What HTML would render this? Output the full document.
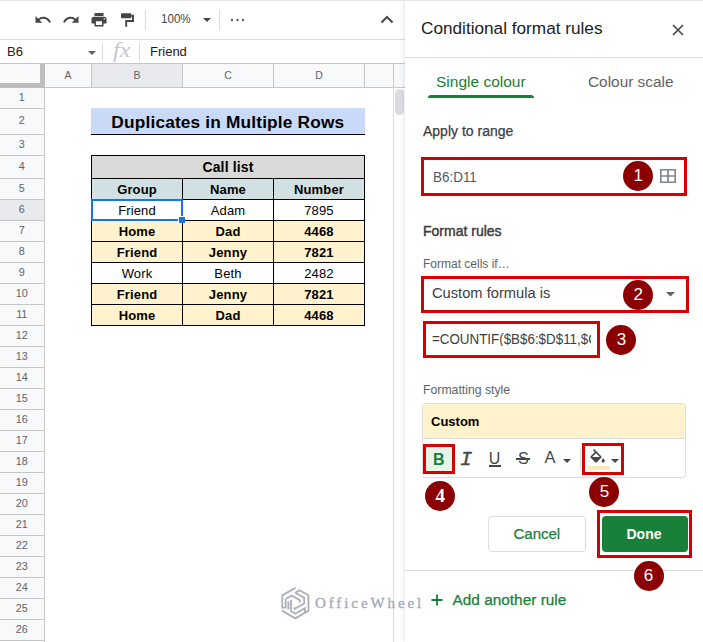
<!DOCTYPE html>
<html><head><meta charset="utf-8">
<style>
*{box-sizing:border-box;margin:0;padding:0}
html,body{width:703px;height:642px;overflow:hidden;background:#fff}
body{position:relative;font-family:"Liberation Sans",Arial,sans-serif;color:#202124}
.abs{position:absolute}
.t{position:absolute;white-space:nowrap;line-height:1}
.vsep{position:absolute;width:1px;background:#dadce0}
  .ch{position:absolute;top:64px;height:24px;background:#f8f9fa;border-right:1px solid #c4c7c5;border-bottom:1px solid #c4c7c5;font-size:10.5px;color:#5f6368;text-align:center;line-height:23px}
.rh{position:absolute;left:0;width:45px;background:#f8f9fa;border-right:1px solid #c4c7c5;border-bottom:1px solid #c4c7c5;font-size:10.8px;color:#5f6368;text-align:center;padding-right:0.5px}
.rh.sel{background:#e8eaed}
.cell{position:absolute;font-size:13px;text-align:center;color:#000;line-height:21px;letter-spacing:0.15px}
.b{font-weight:bold}
.circ{position:absolute;width:30px;height:30px;border-radius:50%;background:#8b0000;color:#fff;font-size:17px;text-align:center;line-height:30px}
.circ.sf{font-family:"Liberation Serif",serif;font-size:19px;line-height:29px}
.red{position:absolute;border:3px solid #d60000}
.med{-webkit-text-stroke:0.25px currentColor}
</style></head><body>

<!-- ===== SHEET ===== -->
<div class="abs" style="left:0;top:39px;width:405px;height:1px;background:#dadce0"></div>
<div class="abs" style="left:0;top:63px;width:405px;height:1px;background:#c4c7c5"></div>

<!-- toolbar icons -->
<svg class="abs" style="left:0;top:0" width="405" height="64" viewBox="0 0 405 64">
 <g fill="#444746">
  <path transform="translate(34,10.800) scale(0.75)" d="M12.5 8c-2.65 0-5.05.99-6.9 2.6L2 7v9h9l-3.62-3.62c1.39-1.16 3.16-1.88 5.12-1.88 3.54 0 6.55 2.31 7.6 5.5l2.37-.78C21.08 11.03 17.15 8 12.500 8z"/>
  <path transform="translate(62,10.800) scale(0.75)" d="M18.4 10.600C16.55 8.99 14.15 8 11.500 8c-4.650 0-8.580 3.030-9.960 7.220L3.900 16c1.050-3.190 4.050-5.500 7.600-5.500 1.950 0 3.730.72 5.120 1.880L13 16h9V7l-3.600 3.600z"/>
  <path transform="translate(90,10.800) scale(0.75)" d="M19 8H5c-1.660 0-3 1.340-3 3v6h4v4h12v-4h4v-6c0-1.660-1.340-3-3-3zm-3 11H8v-5h8v5zm3-7c-.55 0-1-.45-1-1s.45-1 1-1 1 .45 1 1-.45 1-1 1zm-1-9H6v4h12V3z"/>
  <rect x="121" y="13.300" width="10.400" height="4.900" rx="0.800"/><path d="M131.400 15.700H133V21H126.200V26.700" stroke="#444746" stroke-width="1.900" fill="none"/>
  <path d="M203 18h8l-4 4z"/>
  <circle cx="232" cy="20" r="1.200" fill="#5f6368"/><circle cx="237.500" cy="20" r="1.200" fill="#5f6368"/><circle cx="243" cy="20" r="1.200" fill="#5f6368"/>
  <path d="M88 51h8l-4 4z" fill="#5f6368"/>
 </g>
 <path d="M381.500 22.500l5.500-5.500 5.500 5.500" fill="none" stroke="#444746" stroke-width="2"/>
</svg>
<div class="vsep" style="left:145px;top:10px;height:20px"></div>
<div class="vsep" style="left:219px;top:10px;height:20px"></div>
<div class="t" style="left:161px;top:12.600px;font-size:12.400px;color:#444746;transform:scaleX(.935);transform-origin:0 0">100%</div>

<div class="t" style="left:7px;top:45px;font-size:13px;color:#202124">B6</div>
<div class="vsep" style="left:102px;top:43px;height:18px"></div>
<div class="t" style="left:112.500px;top:39.500px;font-size:21px;color:#c4c7c9;transform:scaleX(1.15);transform-origin:0 0;font-family:'Liberation Serif',serif;font-style:italic">fx</div>
<div class="vsep" style="left:139px;top:43px;height:18px"></div>
<div class="t" style="left:150px;top:45px;font-size:13px;color:#202124">Friend</div>

<!-- column headers -->
<div class="ch" style="left:0;width:405px;border-right:none"></div>
<div class="ch" style="left:0;width:45px;border-right:5px solid #bdbdbd;border-bottom:5px solid #bdbdbd"></div>
<div class="ch" style="left:45px;width:47px">A</div>
<div class="ch" style="left:92px;width:91px;background:#e8eaed">B</div>
<div class="ch" style="left:183px;width:91px">C</div>
<div class="ch" style="left:274px;width:91px">D</div>
<div class="ch" style="left:365px;width:29px"></div>

<!-- row headers -->
<div class="rh" style="top:88px;height:21px;line-height:18px">1</div>
<div class="rh" style="top:109px;height:26px;line-height:23px">2</div>
<div class="rh" style="top:135px;height:21px;line-height:18px">3</div>
<div class="rh" style="top:156px;height:23px;line-height:20px">4</div>
<div class="rh" style="top:179px;height:21px;line-height:18px">5</div>
<div class="rh sel" style="top:200px;height:21px;line-height:18px">6</div>
<div class="rh" style="top:221px;height:21px;line-height:18px">7</div>
<div class="rh" style="top:242px;height:21px;line-height:18px">8</div>
<div class="rh" style="top:263px;height:21px;line-height:18px">9</div>
<div class="rh" style="top:284px;height:21px;line-height:18px">10</div>
<div class="rh" style="top:305px;height:21px;line-height:18px">11</div>
<div class="rh" style="top:326px;height:21px;line-height:18px">12</div>
<div class="rh" style="top:347px;height:21px;line-height:18px">13</div>
<div class="rh" style="top:368px;height:21px;line-height:18px">14</div>
<div class="rh" style="top:389px;height:21px;line-height:18px">15</div>
<div class="rh" style="top:410px;height:21px;line-height:18px">16</div>
<div class="rh" style="top:431px;height:21px;line-height:18px">17</div>
<div class="rh" style="top:452px;height:21px;line-height:18px">18</div>
<div class="rh" style="top:473px;height:21px;line-height:18px">19</div>
<div class="rh" style="top:494px;height:21px;line-height:18px">20</div>
<div class="rh" style="top:515px;height:21px;line-height:18px">21</div>
<div class="rh" style="top:536px;height:21px;line-height:18px">22</div>
<div class="rh" style="top:557px;height:21px;line-height:18px">23</div>
<div class="rh" style="top:578px;height:21px;line-height:18px">24</div>
<div class="rh" style="top:599px;height:21px;line-height:18px">25</div>
<div class="rh" style="top:620px;height:21px;line-height:18px">26</div>
<div class="rh" style="top:641px;height:21px;line-height:18px">27</div>

<!-- scrollbar -->
<div class="abs" style="left:393px;top:87px;width:1px;height:555px;background:#dadce0"></div>
<div class="abs" style="left:395px;top:89px;width:9px;height:26px;border-radius:4.500px;background:#dadce0"></div>

<!-- title -->
<div class="cell b" style="left:91px;top:108px;width:274px;height:27px;background:#c9daf8;border-bottom:1px solid #000;font-size:16px;line-height:29px"><span style="display:inline-block;transform:scaleX(1.08)">Duplicates in Multiple Rows</span></div>

<!-- table -->
<div class="abs" style="left:91px;top:155px;width:274px;height:171px;background:#000"></div>
<div class="cell b" style="left:92px;top:156px;width:272px;height:22px;background:#d9d9d9;font-size:14px;line-height:23px">Call list</div>
<div class="cell b" style="left:92px;top:179px;width:90px;height:20px;background:#d0e0e3">Group</div>
<div class="cell b" style="left:183px;top:179px;width:90px;height:20px;background:#d0e0e3">Name</div>
<div class="cell b" style="left:274px;top:179px;width:90px;height:20px;background:#d0e0e3">Number</div>
<div class="cell" style="left:92px;top:200px;width:90px;height:20px;background:#fff">Friend</div>
<div class="cell" style="left:183px;top:200px;width:90px;height:20px;background:#fff">Adam</div>
<div class="cell" style="left:274px;top:200px;width:90px;height:20px;background:#fff">7895</div>
<div class="cell b" style="left:92px;top:221px;width:90px;height:20px;background:#fff2cc">Home</div>
<div class="cell b" style="left:183px;top:221px;width:90px;height:20px;background:#fff2cc">Dad</div>
<div class="cell b" style="left:274px;top:221px;width:90px;height:20px;background:#fff2cc">4468</div>
<div class="cell b" style="left:92px;top:242px;width:90px;height:20px;background:#fff2cc">Friend</div>
<div class="cell b" style="left:183px;top:242px;width:90px;height:20px;background:#fff2cc">Jenny</div>
<div class="cell b" style="left:274px;top:242px;width:90px;height:20px;background:#fff2cc">7821</div>
<div class="cell" style="left:92px;top:263px;width:90px;height:20px;background:#fff">Work</div>
<div class="cell" style="left:183px;top:263px;width:90px;height:20px;background:#fff">Beth</div>
<div class="cell" style="left:274px;top:263px;width:90px;height:20px;background:#fff">2482</div>
<div class="cell b" style="left:92px;top:284px;width:90px;height:20px;background:#fff2cc">Friend</div>
<div class="cell b" style="left:183px;top:284px;width:90px;height:20px;background:#fff2cc">Jenny</div>
<div class="cell b" style="left:274px;top:284px;width:90px;height:20px;background:#fff2cc">7821</div>
<div class="cell b" style="left:92px;top:305px;width:90px;height:20px;background:#fff2cc">Home</div>
<div class="cell b" style="left:183px;top:305px;width:90px;height:20px;background:#fff2cc">Dad</div>
<div class="cell b" style="left:274px;top:305px;width:90px;height:20px;background:#fff2cc">4468</div>

<!-- selection -->
<div class="abs" style="left:91px;top:199px;width:92px;height:22px;border:2px solid #1a73e8"></div>
<div class="abs" style="left:178px;top:216px;width:7px;height:7px;background:#1a73e8;border-left:1px solid #fff;border-top:1px solid #fff"></div>

<!-- ===== PANEL ===== -->
<div class="abs" style="left:405px;top:0;width:298px;height:642px;background:#fff;box-shadow:-1px 0 4px rgba(60,64,67,.13)"></div>
<div class="abs" style="left:0;top:0;width:703px;height:1px;background:#e3e5e8"></div>
<div class="t" style="left:421px;top:20px;font-size:17.200px;color:#202124">Conditional format rules</div>
<svg class="abs" style="left:671px;top:23px" width="14" height="14" viewBox="0 0 14 14"><path d="M2 2l10 10M12 2L2 12" stroke="#444746" stroke-width="1.600" fill="none"/></svg>
<div class="abs" style="left:405px;top:57px;width:298px;height:1px;background:#dadce0"></div>
<div class="t" style="left:436px;top:74px;font-size:15.500px;color:#188038">Single colour</div>
<div class="abs" style="left:428px;top:95px;width:106px;height:3px;background:#188038;border-radius:3px 3px 0 0"></div>
<div class="t" style="left:588px;top:74px;font-size:15.400px;color:#5f6368">Colour scale</div>

<div class="t med" style="left:423px;top:124px;font-size:14px;color:#3c4043">Apply to range</div>
<div class="red" style="left:421px;top:157px;width:266px;height:39px"></div>
<div class="t" style="left:433px;top:169.500px;font-size:14px;color:#54585d;transform:scaleX(.96);transform-origin:0 0">B6:D11</div>
<div class="circ " style="left:623.2px;top:161.4px">1</div>
<svg class="abs" style="left:660px;top:169px" width="16" height="14" viewBox="0 0 16 14"><path d="M0.750 0.750h14.500v12.500h-14.500zM8 0.750v12.500M0.750 7h14.500" fill="none" stroke="#80868b" stroke-width="1.700"/></svg>

<div class="t" style="left:423px;top:223.500px;font-size:14px;color:#3c4043;-webkit-text-stroke:0.45px #3c4043">Format rules</div>
<div class="t" style="left:423px;top:258px;font-size:12px;color:#5f6368">Format cells if…</div>
<div class="red" style="left:421px;top:276px;width:268px;height:37px"></div>
<div class="t" style="left:432px;top:286px;font-size:14.700px;color:#3c4043">Custom formula is</div>
<div class="circ " style="left:623.2px;top:279.6px">2</div>
<svg class="abs" style="left:665.700px;top:292px" width="9" height="4.500" viewBox="0 0 8 4"><path d="M0 0h8L4 4z" fill="#5f6368"/></svg>
<div class="red" style="left:423px;top:321px;width:177px;height:37px"></div>
<div class="t" style="left:432px;top:332px;font-size:14px;color:#3c4043;width:158.500px;overflow:hidden"><span style="display:inline-block;transform:scaleX(.955);transform-origin:0 0">=COUNTIF($B$6:$D$11,$C</span></div>
<div class="circ " style="left:606.4px;top:324.6px">3</div>

<div class="t" style="left:423px;top:384px;font-size:12.250px;color:#5f6368">Formatting style</div>
<div class="abs" style="left:422px;top:403px;width:264px;height:75px;border:1px solid #dadce0;border-radius:4px;overflow:hidden">
  <div style="height:35px;background:#fff2cc;border-bottom:1px solid #dadce0"></div>
</div>
<div class="t b" style="left:431px;top:414.500px;font-size:13px;color:#000">Custom</div>
<div class="abs" style="left:426px;top:447px;width:26px;height:24px;background:#e6f4ea"></div>
<div class="t b" style="left:433px;top:451.700px;font-size:16px;color:#188038">B</div>
<div class="t" style="left:460.300px;top:450.500px;font-size:19.500px;color:#444746;font-style:italic;-webkit-text-stroke:0.35px #444746;font-family:'Liberation Mono',monospace;transform:scaleX(1.05);transform-origin:0 0">I</div>
<div class="t" style="left:488.800px;top:450.700px;font-size:16px;color:#444746">U</div>
<div class="abs" style="left:489px;top:464.500px;width:12px;height:2px;background:#444746"></div>
<div class="t" style="left:518px;top:451.300px;font-size:16px;color:#444746">S</div>
<div class="abs" style="left:516px;top:458px;width:14px;height:1.700px;background:#444746"></div>
<div class="t" style="left:544.400px;top:449.400px;font-size:16.400px;color:#444746">A</div>
<svg class="abs" style="left:563px;top:459px" width="8" height="4" viewBox="0 0 8 4"><path d="M0 0h8L4 4z" fill="#444746"/></svg>
<div class="vsep" style="left:580px;top:448px;height:20px"></div>
<svg class="abs" style="left:588.200px;top:449px" width="19.200" height="19.200" viewBox="0 0 24 24"><path fill="#444746" d="M16.560 8.940L7.620 0 6.210 1.410l2.380 2.380-5.150 5.150c-.59.59-.59 1.540 0 2.120l5.500 5.500c.29.29.68.44 1.060.44s.77-.15 1.060-.44l5.500-5.500c.59-.58.59-1.530 0-2.120zM5.210 10L10 5.210 14.790 10H5.210zM19 11.500s-2 2.170-2 3.500c0 1.100.9 2 2 2s2-.9 2-2c0-1.330-2-3.500-2-3.500z"/></svg>
<div class="abs" style="left:588px;top:466px;width:21px;height:3.500px;background:#fce8b2"></div>
<svg class="abs" style="left:611px;top:459px" width="8" height="4" viewBox="0 0 8 4"><path d="M0 0h8L4 4z" fill="#444746"/></svg>
<div class="red" style="left:423px;top:444px;width:32px;height:30px"></div>
<div class="red" style="left:582px;top:443px;width:42px;height:32px"></div>
<div class="circ sf b" style="left:425.3px;top:481.4px">4</div>
<div class="circ " style="left:589.4px;top:476.5px">5</div>

<div class="abs" style="left:488px;top:516px;width:98px;height:36px;border:1px solid #dadce0;border-radius:4px"></div>
<div class="t med" style="left:513.500px;top:526px;font-size:15px;color:#188038">Cancel</div>
<div class="abs" style="left:602px;top:516px;width:85.500px;height:36px;background:#188038;border-radius:4px"></div>
<div class="t b" style="left:626.500px;top:527px;font-size:14px;color:#fff">Done</div>
<div class="red" style="left:597px;top:510px;width:95px;height:48px"></div>
<div class="abs" style="left:405px;top:570px;width:298px;height:1px;background:#dadce0"></div>
<div class="circ " style="left:633.6px;top:560.6px">6</div>
<svg class="abs" style="left:431px;top:593.500px" width="12" height="12" viewBox="0 0 12 12"><path d="M6 0.500v11M0.500 6h11" stroke="#188038" stroke-width="1.800" fill="none"/></svg>
<div class="t med" style="left:452.500px;top:592.200px;font-size:15.400px;color:#188038">Add another rule</div>

<!-- watermark -->
<svg class="abs" style="left:275px;top:580px" width="50" height="45" viewBox="0 0 703 633">
 <g fill="none" stroke="#a9adbc" stroke-width="25" stroke-linejoin="miter">
  <path d="M290 108L102 216V390H150V262"/>
  <path d="M95 430L285 540L470 432V215L345 143L285 178"/>
  <path d="M285 178L410 250V330L275 408V385"/>
  <path d="M160 262L235 217L350 284V318"/>
  <path d="M225 282V440L285 475L420 398V470"/><path d="M188 300V415"/>
 </g>
</svg>
<div class="t" style="left:315px;top:595.700px;font-size:15px;letter-spacing:2.900px;color:#a3a7b6;-webkit-text-stroke:0.3px #a3a7b6;font-family:'Liberation Serif',serif">OfficeWheel</div>
</body></html>
